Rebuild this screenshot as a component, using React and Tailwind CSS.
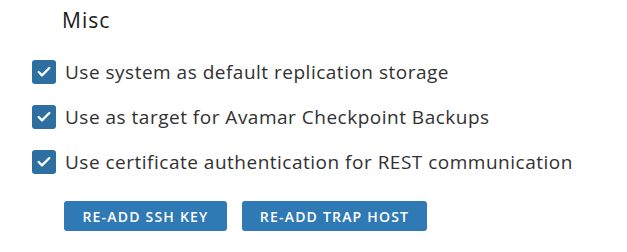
import { Check } from 'lucide-react'

const options = [
  'Use system as default replication storage',
  'Use as target for Avamar Checkpoint Backups',
  'Use certificate authentication for REST communication',
]

function CheckRow({ label }) {
  return (
    <div className="flex items-center h-[24px]">
      <div className="w-[24px] h-[24px] rounded-[3px] bg-[#2d6fa1] flex items-center justify-center">
        <Check size={16} strokeWidth={3.5} className="text-white" />
      </div>
      <span className="ml-[9px] text-[19px] text-[#313131] leading-none tracking-[0.5px]">{label}</span>
    </div>
  )
}

export default function App() {
  return (
    <div className="w-[627px] h-[252px] bg-white font-['Open_Sans',sans-serif] pl-[32px]">
      <h2 className="pl-[30px] pt-[8px] text-[21px] leading-[24px] text-[#1b1b1b] tracking-[1px]">Misc</h2>
      <div className="mt-[28px] flex flex-col gap-[21px]">
        {options.map((o) => (
          <CheckRow key={o} label={o} />
        ))}
      </div>
      <div className="mt-[27px] ml-[32px] flex gap-[15px]">
        <button className="h-[30px] w-[163px] rounded-[3px] bg-[#2f79b5] text-white text-[14px] font-semibold tracking-[1.2px]">
          RE-ADD SSH KEY
        </button>
        <button className="h-[30px] w-[185px] rounded-[3px] bg-[#2f79b5] text-white text-[14px] font-semibold tracking-[1.2px]">
          RE-ADD TRAP HOST
        </button>
      </div>
    </div>
  )
}
